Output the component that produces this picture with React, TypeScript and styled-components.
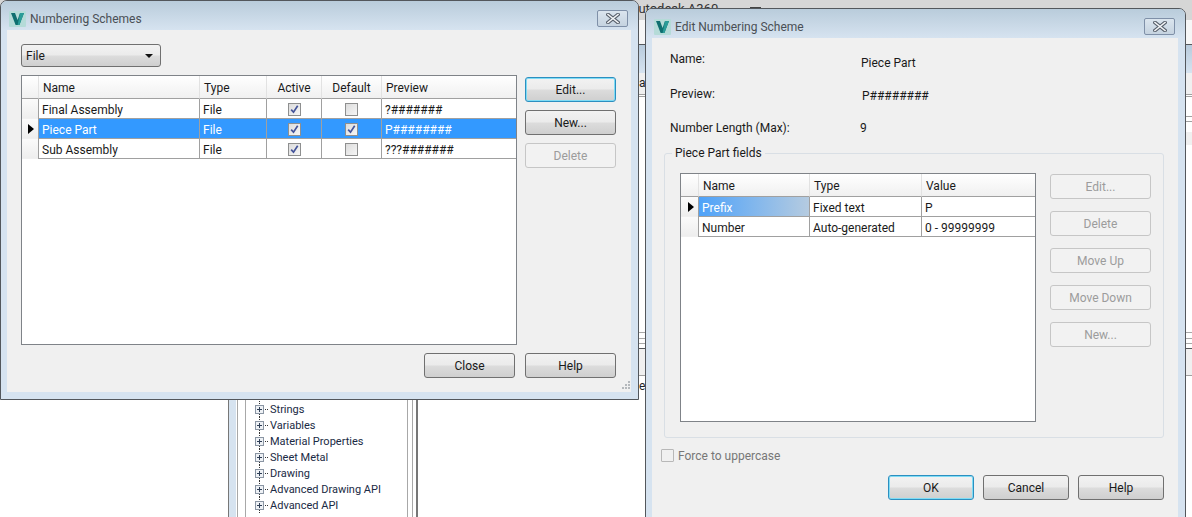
import React from "react";
import styled, { createGlobalStyle, css } from "styled-components";

const UI_FONT = `Roboto, "Noto Sans", "Liberation Sans", sans-serif`;

const GlobalStyle = createGlobalStyle`
  html, body {
    margin: 0;
    padding: 0;
    background: #fff;
  }
  * {
    box-sizing: border-box;
  }
`;

// Backdrop: the application showing behind the two dialogs
const BANDS = [
  { h: 24, bg: "#f7f7f7" },
  { h: 1, bg: "#55585c" },
  { h: 28, bg: "linear-gradient(#b8cbdc, #d6e3f0)" },
  { h: 21, bg: "#f0f0f0", text: "a" },
  { h: 1, bg: "#a0a0a0" },
  { h: 1, bg: "#fff" },
  { h: 1, bg: "#a0a0a0" },
  { h: 19, bg: "#fff" },
  { h: 1, bg: "#a0a0a0", offset: 1186 },
  { h: 4, bg: "#fff" },
  { h: 1, bg: "#a0a0a0", offset: 1186 },
  { h: 10, bg: "#fff" },
  { h: 13, bg: "#f0f0f0", offset: 1186 },
  { h: 187, bg: "#fff" },
  { h: 1, bg: "#a8a8a8" },
  { h: 5, bg: "#fff" },
  { h: 1, bg: "#a8a8a8" },
  { h: 4, bg: "#fff" },
  { h: 1, bg: "#a8a8a8" },
  { h: 4, bg: "#fff" },
  { h: 1, bg: "#55585c" },
  { h: 26, bg: "#f0f0f0" },
  { h: 1, bg: "#a0a0a0" },
  { h: 5, bg: "#fff" },
  { h: 11, bg: "#fff", text: "et" },
  { h: 8, bg: "#fff" },
];

const TREE_ITEMS = [
  "Strings",
  "Variables",
  "Material Properties",
  "Sheet Metal",
  "Drawing",
  "Advanced Drawing API",
  "Advanced API",
];

const SCHEMES = [
  { name: "Final Assembly", type: "File", def: false, preview: "?#######" },
  { name: "Piece Part", type: "File", def: true, preview: "P########", selected: true },
  { name: "Sub Assembly", type: "File", def: false, preview: "???#######" },
];

const SCHEME_COLUMNS = "16px 161px 67px 55px 60px 1fr";
const FIELD_COLUMNS = "17px 111px 112px 1fr";

const VLogo = () => (
  <svg width="17" height="16" viewBox="0 0 17 16">
    <rect x="0" y="0" width="17" height="16" rx="1" fill="#b5dbd8" />
    <path d="M2 2h4l2.6 7L11 2h4l-4.6 12H6.6z" fill="#0f6f70" />
    <path d="M11 2h4l-4.6 12H8.6z" fill="#2a9c98" />
  </svg>
);

const CloseGlyph = () => (
  <svg width="14" height="11" viewBox="0 0 14 11">
    <path d="M2 1.5l10 8M12 1.5l-10 8" stroke="#59626d" strokeWidth="3.6" strokeLinecap="square" />
    <path d="M2 1.5l10 8M12 1.5l-10 8" stroke="#f4f6f8" strokeWidth="1.6" strokeLinecap="square" />
  </svg>
);

const ExpanderIcon = () => (
  <svg width="14" height="16" viewBox="0 0 14 16">
    <path d="M4.5 0v4M4.5 13v3M10 8.5h4" stroke="#333" strokeDasharray="1 1" fill="none" />
    <rect x="0.5" y="4.5" width="8" height="8" fill="#eef1f5" stroke="#8a95a3" />
    <path d="M2 8.5h5M4.5 6v5" stroke="#2d3d55" fill="none" />
  </svg>
);

const CheckBox = ({ checked }: { checked?: boolean }) => (
  <CheckFrame>
    {checked && (
      <svg width="11" height="11" viewBox="0 0 11 11">
        <path d="M2.2 5.6l2.3 2.6 4.2-6.4" stroke="#44549a" strokeWidth="1.7" fill="none" />
      </svg>
    )}
  </CheckFrame>
);

const TitleBar = ({ title }: { title: string }) => (
  <Title>
    <VLogo />
    <TitleText>{title}</TitleText>
    <CloseButton>
      <CloseGlyph />
    </CloseButton>
  </Title>
);

const App = () => {
  return (
    <>
      <GlobalStyle />
      <Desktop>
        <Backdrop>
          <TopBand>
            Autodesk A360
            <TopMark />
          </TopBand>
          {BANDS.map((band, i) => (
            <Band key={i} $h={band.h} $bg={band.bg} $offset={band.offset}>
              {band.text}
            </Band>
          ))}
          <TreeBand>
            <BlueEdge />
            <TreePane>
              {TREE_ITEMS.map((item) => (
                <TreeRow key={item}>
                  <ExpanderIcon />
                  {item}
                </TreeRow>
              ))}
            </TreePane>
            <PaneEdge />
          </TreeBand>
        </Backdrop>

        <SchemesWindow>
          <TitleBar title="Numbering Schemes" />
          <SchemesClient>
            <Dropdown>
              File
              <DropArrow />
            </Dropdown>
            <SchemesBody>
              <DataGrid>
                <GridRow $columns={SCHEME_COLUMNS} $header>
                  <RowHead $header />
                  <HeadCell>Name</HeadCell>
                  <HeadCell>Type</HeadCell>
                  <HeadCell $center>Active</HeadCell>
                  <HeadCell $center>Default</HeadCell>
                  <HeadCell>Preview</HeadCell>
                </GridRow>
                {SCHEMES.map((row) => (
                  <GridRow key={row.name} $columns={SCHEME_COLUMNS}>
                    <RowHead>{row.selected && <RowArrow />}</RowHead>
                    <Cell $selected={row.selected}>{row.name}</Cell>
                    <Cell $selected={row.selected}>{row.type}</Cell>
                    <Cell $selected={row.selected} $center>
                      <CheckBox checked />
                    </Cell>
                    <Cell $selected={row.selected} $center>
                      <CheckBox checked={row.def} />
                    </Cell>
                    <Cell $selected={row.selected}>{row.preview}</Cell>
                  </GridRow>
                ))}
              </DataGrid>
              <ButtonColumn>
                <Button $w={91} $variant="default">Edit...</Button>
                <Button $w={91}>New...</Button>
                <Button $w={91} $variant="disabled">Delete</Button>
              </ButtonColumn>
            </SchemesBody>
            <SchemesFooter>
              <Button $w={91}>Close</Button>
              <Button $w={91}>Help</Button>
            </SchemesFooter>
            <SizeGrip>
              <svg width="12" height="12" viewBox="0 0 12 12">
                <path d="M9 1h2v2H9zM6 4h2v2H6zM9 4h2v2H9zM3 7h2v2H3zM6 7h2v2H6zM9 7h2v2H9z" fill="#b4b8bc" />
              </svg>
            </SizeGrip>
          </SchemesClient>
        </SchemesWindow>

        <EditWindow>
          <TitleBar title="Edit Numbering Scheme" />
          <EditClient>
            <InfoRow $h={35}>
              <InfoLabel>Name:</InfoLabel>
              <InfoValue $dy={4}>Piece Part</InfoValue>
            </InfoRow>
            <InfoRow $h={34}>
              <InfoLabel>Preview:</InfoLabel>
              <InfoValue $dy={2} $dx={1}>P########</InfoValue>
            </InfoRow>
            <InfoRow $h={26}>
              <InfoLabel>Number Length (Max):</InfoLabel>
              <InfoValue $dx={-1}>9</InfoValue>
            </InfoRow>
            <GroupBox>
              <GroupLegend>Piece Part fields</GroupLegend>
              <FieldGrid>
                <GridRow $columns={FIELD_COLUMNS} $header>
                  <RowHead $header />
                  <HeadCell>Name</HeadCell>
                  <HeadCell>Type</HeadCell>
                  <HeadCell>Value</HeadCell>
                </GridRow>
                <GridRow $columns={FIELD_COLUMNS}>
                  <RowHead>
                    <RowArrow />
                  </RowHead>
                  <FadedCell>Prefix</FadedCell>
                  <Cell>Fixed text</Cell>
                  <Cell>P</Cell>
                </GridRow>
                <GridRow $columns={FIELD_COLUMNS}>
                  <RowHead />
                  <Cell>Number</Cell>
                  <Cell>Auto-generated</Cell>
                  <Cell>0 - 99999999</Cell>
                </GridRow>
              </FieldGrid>
              <FieldButtons>
                <Button $w={101} $variant="disabled">Edit...</Button>
                <Button $w={101} $variant="disabled">Delete</Button>
                <Button $w={101} $variant="disabled">Move Up</Button>
                <Button $w={101} $variant="disabled">Move Down</Button>
                <Button $w={101} $variant="disabled">New...</Button>
              </FieldButtons>
            </GroupBox>
            <ForceRow>
              <ForceBox />
              Force to uppercase
            </ForceRow>
            <EditFooter>
              <Button $w={86} $variant="default">OK</Button>
              <Button $w={86}>Cancel</Button>
              <Button $w={86}>Help</Button>
            </EditFooter>
          </EditClient>
        </EditWindow>
      </Desktop>
    </>
  );
};

const Desktop = styled.div`
  position: relative;
  width: 1192px;
  height: 517px;
  overflow: hidden;
  background: #fff;
  font-family: ${UI_FONT};
  font-size: 12px;
  color: #1a1a1a;
`;

// Backdrop
const Backdrop = styled.div`
  display: flex;
  flex-direction: column;
`;

const TopBand = styled.div`
  display: flex;
  height: 20px;
  padding: 1px 0 0 630px;
  background: #d6d6d6;
  line-height: 15px;
  font-size: 13px;
  color: #333;
`;

const TopMark = styled.span`
  width: 11px;
  height: 2px;
  margin: 6px 0 0 32px;
  background: #444;
`;

const Band = styled.div<{ $h: number; $bg: string; $offset?: number }>`
  height: ${(p) => p.$h}px;
  margin-left: ${(p) => p.$offset ?? 0}px;
  padding-left: 639px;
  background: ${(p) => p.$bg};
  line-height: ${(p) => p.$h}px;
  font-size: 12px;
  color: #222;
  overflow: hidden;
`;

const TreeBand = styled.div`
  display: flex;
  height: 117px;
  padding-left: 228px;
`;

const BlueEdge = styled.div`
  width: 17px;
  border-left: 1px solid #777;
  background: linear-gradient(
    to right,
    #d6e3f0 7px,
    #fff 7px,
    #fff 8px,
    #a8a8a8 8px,
    #a8a8a8 9px,
    #fff 9px
  );
`;

const TreePane = styled.div`
  width: 163px;
  padding: 1px 0 0 9px;
  border-left: 1px solid #a8a8a8;
  border-right: 1px solid #a8a8a8;
`;

const PaneEdge = styled.div`
  width: 10px;
  border-right: 2px solid #777;
  background: linear-gradient(to right, #fff 4px, #a8a8a8 4px, #a8a8a8 5px, #fff 5px);
`;

const TreeRow = styled.div`
  display: flex;
  align-items: center;
  height: 16px;
  font-size: 11px;
  color: #1a2a44;
  gap: 1px;
  white-space: nowrap;
`;

// Windows
const Window = styled.div`
  position: absolute;
  display: flex;
  flex-direction: column;
  border: 1px solid #53575c;
  border-radius: 7px 7px 0 0;
  background: #d6e3f0;
  padding: 0 7px 7px 6px;
`;

const SchemesWindow = styled(Window)`
  left: 0;
  top: 0;
  width: 639px;
  height: 400px;
  z-index: 1;
`;

const EditWindow = styled(Window)`
  left: 645px;
  top: 8px;
  width: 541px;
  height: 520px;
  z-index: 2;
`;

const Title = styled.div`
  position: relative;
  display: flex;
  align-items: center;
  flex: none;
  height: 29px;
  margin: 0 -7px 0 -6px;
  padding: 7px 10px 0 8px;
  background: linear-gradient(#b9ccdb, #d6e3f0);
  border-radius: 6px 6px 0 0;
`;

const TitleText = styled.span`
  flex: 1;
  margin-left: 4px;
  font-size: 12px;
  color: #4a4f55;
`;

const CloseButton = styled.div`
  display: flex;
  align-items: center;
  justify-content: center;
  width: 31px;
  height: 17px;
  margin-top: -2px;
  border: 1px solid #7f90a8;
  border-radius: 2px;
  background: linear-gradient(#dbe5ee, #c5d3e0);
`;

const SchemesClient = styled.div`
  position: relative;
  flex: 1;
  padding: 14px 15px 0 14px;
  background: #f0f0f0;
`;

const Dropdown = styled.div`
  position: relative;
  display: flex;
  align-items: center;
  width: 140px;
  height: 23px;
  padding-left: 4px;
  border: 1px solid #707070;
  border-radius: 3px;
  background: linear-gradient(#f2f2f2, #ebebeb 48%, #dcdcdc 52%, #cfcfcf);
`;

const DropArrow = styled.span`
  position: absolute;
  right: 7px;
  top: 9px;
  border-left: 4px solid transparent;
  border-right: 4px solid transparent;
  border-top: 4px solid #111;
`;

const SchemesBody = styled.div`
  display: flex;
  gap: 8px;
  margin-top: 8px;
`;

const DataGrid = styled.div`
  flex: none;
  width: 496px;
  height: 270px;
  border: 1px solid #7f8388;
  background: #fff;
`;

const FieldGrid = styled(DataGrid)`
  width: 356px;
  height: 249px;
`;

const GridRow = styled.div<{ $columns: string; $header?: boolean }>`
  display: grid;
  grid-template-columns: ${(p) => p.$columns};
  height: ${(p) => (p.$header ? 23 : 20)}px;
`;

const RowHead = styled.div<{ $header?: boolean }>`
  display: flex;
  align-items: center;
  justify-content: center;
  background: ${(p) =>
    p.$header ? "linear-gradient(#fff, #f0f0f0)" : "linear-gradient(#fbfbfb, #eeeeee)"};
  border-bottom: 1px solid ${(p) => (p.$header ? "#a0a0a0" : "#f0f0f0")};
`;

const RowArrow = styled.span`
  border-top: 5px solid transparent;
  border-bottom: 5px solid transparent;
  border-left: 6px solid #000;
  margin-left: 2px;
`;

const HeadCell = styled.div<{ $center?: boolean }>`
  display: flex;
  align-items: center;
  justify-content: ${(p) => (p.$center ? "center" : "flex-start")};
  padding-left: ${(p) => (p.$center ? 0 : 4)}px;
  padding-top: 2px;
  background: linear-gradient(#fff, #f0f0f0);
  border-left: 1px solid #e2e2e2;
  border-bottom: 1px solid #a0a0a0;
`;

const Cell = styled.div<{ $selected?: boolean; $center?: boolean }>`
  display: flex;
  align-items: center;
  justify-content: ${(p) => (p.$center ? "center" : "flex-start")};
  padding-left: ${(p) => (p.$center ? 0 : 3)}px;
  padding-top: ${(p) => (p.$center ? 1 : 2)}px;
  border-left: 1px solid #a0a0a0;
  border-bottom: 1px solid #a0a0a0;
  white-space: nowrap;
  ${(p) =>
    p.$selected &&
    css`
      background: #3399ff;
      color: #fff;
    `}
`;

const FadedCell = styled(Cell)`
  background: linear-gradient(to right, #4ea2f9, #b5cbe0);
  color: #fff;
`;

const CheckFrame = styled.span`
  display: flex;
  align-items: center;
  justify-content: center;
  width: 13px;
  height: 13px;
  border: 1px solid #8e8f8f;
  background: linear-gradient(135deg, #dcdcdc, #f6f6f6);
`;

const ButtonColumn = styled.div`
  display: flex;
  flex-direction: column;
  gap: 8px;
  padding-top: 2px;
`;

const Button = styled.div<{ $w: number; $variant?: "default" | "disabled" }>`
  display: flex;
  align-items: center;
  justify-content: center;
  flex: none;
  width: ${(p) => p.$w}px;
  height: 25px;
  border: 1px solid #707070;
  border-radius: 3px;
  background: linear-gradient(#f2f2f2, #ebebeb 48%, #dcdcdc 52%, #cfcfcf);
  color: #1a1a1a;
  ${(p) =>
    p.$variant === "default" &&
    css`
      border-color: #2c8fc0;
      box-shadow: inset 0 0 0 1px #7fdcf5;
    `}
  ${(p) =>
    p.$variant === "disabled" &&
    css`
      border-color: #c6c6c6;
      background: #f2f2f2;
      color: #9c9c9c;
    `}
`;

const SchemesFooter = styled.div`
  display: flex;
  justify-content: flex-end;
  gap: 10px;
  margin-top: 8px;
`;

const SizeGrip = styled.div`
  position: absolute;
  right: 0;
  bottom: 0;
  display: flex;
`;

const EditClient = styled.div`
  flex: 1;
  display: flex;
  flex-direction: column;
  padding: 12px 14px 0 11px;
  background: #f0f0f0;
`;

const InfoRow = styled.div<{ $h: number }>`
  display: flex;
  flex: none;
  height: ${(p) => p.$h}px;
  padding-left: 7px;
`;

const InfoLabel = styled.div`
  width: 191px;
  line-height: 18px;
`;

const InfoValue = styled.div<{ $dx?: number; $dy?: number }>`
  margin-left: ${(p) => p.$dx ?? 0}px;
  padding-top: ${(p) => p.$dy ?? 0}px;
  line-height: 18px;
`;

const GroupBox = styled.div`
  position: relative;
  display: flex;
  flex: none;
  gap: 14px;
  height: 285px;
  margin-left: 1px;
  margin-top: 8px;
  padding: 19px 0 0 15px;
  border: 1px solid #d9dfe5;
  border-radius: 3px;
`;

const GroupLegend = styled.div`
  position: absolute;
  left: 7px;
  top: -9px;
  padding: 0 3px;
  background: #f0f0f0;
  line-height: 16px;
`;

const FieldButtons = styled.div`
  display: flex;
  flex-direction: column;
  gap: 12px;
  padding-top: 1px;
`;

const ForceRow = styled.div`
  display: flex;
  align-items: center;
  gap: 4px;
  height: 13px;
  margin: 11px 0 0 -2px;
  color: #777;
`;

const ForceBox = styled.span`
  width: 13px;
  height: 13px;
  border: 1px solid #b8b8b8;
  border-radius: 1px;
  background: #f0f0f0;
`;

const EditFooter = styled.div`
  display: flex;
  justify-content: flex-end;
  gap: 9px;
  margin-top: 13px;
`;

export default App;
